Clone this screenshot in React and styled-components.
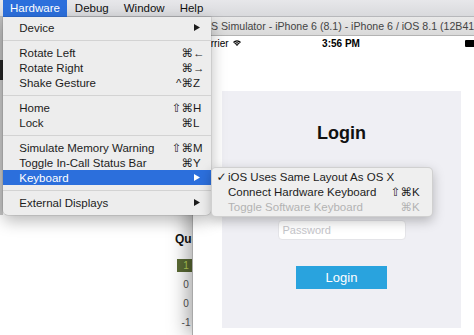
import React from "react";
import styled, { createGlobalStyle } from "styled-components";

const Global = createGlobalStyle`
  html, body { margin: 0; padding: 0; background: #fff; }
  body { font-family: "Liberation Sans", "DejaVu Sans", Arial, sans-serif; }
  * { box-sizing: border-box; }
`;

const FONT = `"Liberation Sans", "DejaVu Sans", Arial, sans-serif`;
const BLUE = "#2c6fdc";

const Screen = styled.div`
  position: relative;
  width: 474px;
  height: 335px;
  overflow: hidden;
  background: #fff;
  font-family: ${FONT};
  color: #1c1c1c;
`;

const MenuBar = styled.div`
  display: flex;
  height: 17px;
  padding-left: 2.5px;
  background: linear-gradient(#e7e7ea, #d8d9dc);
  box-shadow: inset 0 -1px 0 #b7b8bb;
  position: relative;
  z-index: 2;
`;

const MenuTitle = styled.div`
  padding: 0 7.5px;
  line-height: 17px;
  font-size: 11.5px;
  white-space: nowrap;
  background: ${(p) => (p.$active ? BLUE : "transparent")};
  color: ${(p) => (p.$active ? "#fff" : "#111")};
`;

const Desktop = styled.div`
  display: flex;
  height: 318px;
`;

const BackWindow = styled.div`
  display: flex;
  width: 192px;
  flex-shrink: 0;
  overflow: hidden;
  background: #fff;
`;

const EdgeStrip = styled.div`
  width: 3px;
  height: 198px;
  flex-shrink: 0;
  background: linear-gradient(
    to bottom,
    #bcbcbc 0 43px,
    #262626 43px 63px,
    #c4c4c4 63px
  );
`;

const BackContent = styled.div`
  display: flex;
  flex-direction: column;
  padding: 214px 0 0 172px;
`;

const BackHeading = styled.div`
  font-size: 12px;
  font-weight: bold;
  line-height: 16px;
  white-space: nowrap;
  color: #111;
`;

const ValueColumn = styled.div`
  display: flex;
  flex-direction: column;
  margin: 9px 0 0 2px;
  width: 18px;
`;

const ValueRow = styled.div`
  height: 19px;
  display: flex;
  align-items: center;
  justify-content: center;
`;

const ValueCell = styled.div`
  width: 100%;
  height: 13px;
  display: flex;
  align-items: center;
  justify-content: center;
  font-size: 10px;
  color: ${(p) => (p.$hot ? "#b9d45a" : "#555")};
  background: ${(p) => (p.$hot ? "#5b6b35" : "transparent")};
`;

const SimWindow = styled.div`
  position: relative;
  z-index: 1;
  width: 297px;
  flex-shrink: 0;
  border-left: 1px solid #a8a8a8;
  background: #fff;
  box-shadow: -5px 0 18px rgba(0, 0, 0, 0.34);
`;

const TitleBar = styled.div`
  height: 19px;
  padding-left: 7.4px;
  background: linear-gradient(#e9e9e9, #d9d9d9);
  border-bottom: 1px solid #b3b3b3;
  font-size: 10.6px;
  line-height: 18px;
  color: #444;
  white-space: nowrap;
`;

const StatusBar = styled.div`
  height: 14px;
  display: grid;
  grid-template-columns: 1fr auto 1fr;
  align-items: center;
  padding: 0 5px;
  font-size: 10px;
  color: #000;
`;

const Carrier = styled.div`
  display: flex;
  align-items: center;
  gap: 4px;
`;

const Time = styled.div`
  font-weight: bold;
`;

const BatteryWrap = styled.div`
  display: flex;
  justify-content: flex-end;
`;

const PhoneScreen = styled.div`
  padding: 41px 0 0 29px;
`;

const Card = styled.div`
  width: 239px;
  height: 237px;
  background: #efeff4;
  display: flex;
  flex-direction: column;
  align-items: center;
  padding-top: 31px;
`;

const CardTitle = styled.div`
  font-size: 18px;
  font-weight: bold;
  line-height: 22px;
  color: #111;
`;

const Field = styled.div`
  width: 128px;
  height: 20px;
  margin-top: 76px;
  background: #fff;
  border: 1px solid #e4e4e8;
  border-radius: 4px;
  padding-left: 4px;
  font-size: 11px;
  line-height: 18px;
  color: #c4c4c9;
`;

const LoginButton = styled.div`
  width: 91px;
  height: 23px;
  margin-top: 26px;
  background: #29a3de;
  color: #fff;
  font-size: 13px;
  line-height: 23px;
  text-align: center;
`;

const Dropdown = styled.div`
  position: absolute;
  top: 17px;
  left: 3px;
  width: 208px;
  z-index: 5;
  padding: 3px 0 5px;
  background: #ededed;
  border-radius: 0 0 5px 5px;
  box-shadow: 0 6px 16px rgba(0, 0, 0, 0.28), 0 0 0 0.5px rgba(0, 0, 0, 0.15);
`;

const Item = styled.div`
  display: flex;
  align-items: center;
  height: 15px;
  padding: 0 8px 0 16.3px;
  font-size: 11.5px;
  white-space: nowrap;
  background: ${(p) => (p.$active ? BLUE : "transparent")};
  color: ${(p) => (p.$active ? "#fff" : p.$disabled ? "#b3b3b3" : "#1c1c1c")};
`;

const Label = styled.span`
  flex: 1;
`;

const Shortcut = styled.span`
  display: flex;
  align-items: center;
`;

const Mods = styled.span`
  text-align: right;
  font-size: 11.5px;
`;

const Key = styled.span`
  width: 10px;
  text-align: left;
`;

const Arrow = styled.svg`
  width: 6px;
  height: 7px;
  margin-right: 3px;
  fill: currentColor;
`;

const Separator = styled.div`
  height: 1px;
  margin: 5px 0 4px;
  background: #d3d3d3;
`;

const SubMenu = styled.div`
  position: absolute;
  top: 167px;
  left: 211px;
  width: 222px;
  z-index: 6;
  padding: 1px 10px 2px 0;
  background: #efefef;
  border: 1px solid rgba(0, 0, 0, 0.13);
  border-radius: 5px;
  box-shadow: 0 4px 12px rgba(0, 0, 0, 0.25);
`;

const SubItem = styled(Item)`
  padding: 0;
`;

const Check = styled.span`
  width: 16px;
  padding-left: 4.5px;
  font-size: 12px;
  flex-shrink: 0;
`;

const menuItems = [
  { label: "Device", sub: true },
  "sep",
  { label: "Rotate Left", mods: "⌘", key: "←" },
  { label: "Rotate Right", mods: "⌘", key: "→" },
  { label: "Shake Gesture", mods: "^⌘", key: "Z" },
  "sep",
  { label: "Home", mods: "⇧⌘", key: "H" },
  { label: "Lock", mods: "⌘", key: "L" },
  "sep",
  { label: "Simulate Memory Warning", mods: "⇧⌘", key: "M" },
  { label: "Toggle In-Call Status Bar", mods: "⌘", key: "Y" },
  { label: "Keyboard", sub: true, active: true },
  "sep",
  { label: "External Displays", sub: true },
];

const subItems = [
  { label: "iOS Uses Same Layout As OS X", checked: true },
  { label: "Connect Hardware Keyboard", mods: "⇧⌘", key: "K" },
  { label: "Toggle Software Keyboard", mods: "⌘", key: "K", disabled: true },
];

function Wifi() {
  return (
    <svg width="8" height="6" viewBox="0 0 8 6">
      <path d="M4 6 L0 1.9 A5.8 5.8 0 0 1 8 1.9 Z" fill="#000" />
      <path d="M1.2 3.1 A4 4 0 0 1 6.8 3.1" stroke="#fff" strokeWidth="0.7" fill="none" />
      <path d="M2.4 4.3 A2.3 2.3 0 0 1 5.6 4.3" stroke="#fff" strokeWidth="0.7" fill="none" />
    </svg>
  );
}

function Battery() {
  return (
    <svg width="19" height="7" viewBox="0 0 19 7">
      <rect x="0" y="0" width="17" height="7" rx="1" fill="#000" />
      <rect x="17" y="2" width="2" height="3" fill="#000" />
    </svg>
  );
}

export default function App() {
  return (
    <Screen>
      <Global />
      <MenuBar>
        <MenuTitle $active>Hardware</MenuTitle>
        <MenuTitle>Debug</MenuTitle>
        <MenuTitle>Window</MenuTitle>
        <MenuTitle>Help</MenuTitle>
      </MenuBar>
      <Desktop>
        <BackWindow>
          <EdgeStrip />
          <BackContent>
            <BackHeading>Question</BackHeading>
            <ValueColumn>
              <ValueRow>
                <ValueCell $hot>1</ValueCell>
              </ValueRow>
              <ValueRow>
                <ValueCell>0</ValueCell>
              </ValueRow>
              <ValueRow>
                <ValueCell>0</ValueCell>
              </ValueRow>
              <ValueRow>
                <ValueCell>-1</ValueCell>
              </ValueRow>
            </ValueColumn>
          </BackContent>
        </BackWindow>
        <SimWindow>
          <TitleBar>iOS Simulator - iPhone 6 (8.1) - iPhone 6 / iOS 8.1 (12B411)</TitleBar>
          <StatusBar>
            <Carrier>
              Carrier <Wifi />
            </Carrier>
            <Time>3:56 PM</Time>
            <BatteryWrap>
              <Battery />
            </BatteryWrap>
          </StatusBar>
          <PhoneScreen>
            <Card>
              <CardTitle>Login</CardTitle>
              <Field>Password</Field>
              <LoginButton>Login</LoginButton>
            </Card>
          </PhoneScreen>
        </SimWindow>
      </Desktop>

      <Dropdown>
        {menuItems.map((it, i) =>
          it === "sep" ? (
            <Separator key={i} />
          ) : (
            <Item key={i} $active={it.active}>
              <Label>{it.label}</Label>
              {it.sub ? (
                <Arrow viewBox="0 0 6 7">
                  <path d="M0 0 L6 3.5 L0 7 Z" />
                </Arrow>
              ) : (
                <Shortcut>
                  <Mods>{it.mods}</Mods>
                  <Key>{it.key}</Key>
                </Shortcut>
              )}
            </Item>
          )
        )}
      </Dropdown>

      <SubMenu>
        {subItems.map((it, i) => (
          <SubItem key={i} $disabled={it.disabled}>
            <Check>{it.checked ? "✓" : ""}</Check>
            <Label>{it.label}</Label>
            {it.key && (
              <Shortcut>
                <Mods>{it.mods}</Mods>
                <Key>{it.key}</Key>
              </Shortcut>
            )}
          </SubItem>
        ))}
      </SubMenu>
    </Screen>
  );
}
